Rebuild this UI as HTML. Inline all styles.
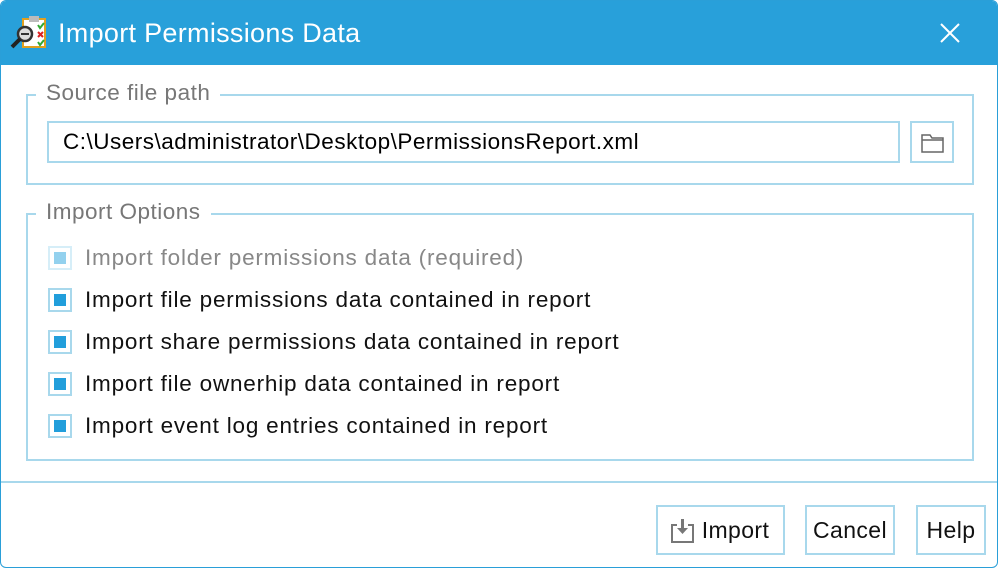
<!DOCTYPE html><html><head><style>
body{margin:0;width:998px;height:568px;overflow:hidden;background:#fff;font-family:"Liberation Sans",sans-serif;}
.win{position:absolute;left:0;top:0;width:996px;height:566px;border:1px solid #2a9fd8;border-radius:6px;overflow:hidden;background:#fff}
.tb{position:absolute;left:0;top:0;right:0;height:64px;background:#28a0da;color:#fff}
.tt{position:absolute;left:57px;top:17px;font-size:27px;letter-spacing:0.3px}
.x{position:absolute;left:938px;top:21px}
.grp{position:absolute;border:2px solid #a8d8ec}
.lg{position:absolute;background:#fff;color:#777;font-size:22.5px;letter-spacing:0.5px;padding:0 10px;top:-16px;left:8px}
.inp{position:absolute;left:46px;top:120px;font-size:22.5px;letter-spacing:0.5px;line-height:38px;padding-left:14px;box-sizing:border-box;width:853px;height:42px;border:2px solid #a8d8ec}
.br{position:absolute;left:909px;top:120px;width:44px;height:42px;border:2px solid #a8d8ec;box-sizing:border-box}
.cb{position:absolute;left:47px;width:24px;height:24px;border:2px solid #a8d8ec;box-sizing:border-box;background:#fff}
.cb i{position:absolute;left:4px;top:4px;width:12px;height:12px;background:#229edb}
.lb{position:absolute;left:84px;font-size:22.5px;letter-spacing:0.8px;color:#111}
.btn{position:absolute;top:504px;height:50px;border:2px solid #a8d8ec;box-sizing:border-box;font-size:23px;letter-spacing:0.4px;line-height:46px;text-align:center;color:#111}
</style></head><body><div class="win">
<div class="tb">
<svg style="position:absolute;left:8px;top:12px" width="42" height="42" viewBox="0 0 42 42"><rect x="14" y="6" width="22" height="28" fill="#fff" stroke="#e0a020" stroke-width="2"/><rect x="20" y="3" width="10" height="6" fill="#bbb"/><path d="M29 12l2 3 4-5M29 29l2 3 4-5" stroke="#3a3" stroke-width="2" fill="none"/><path d="M29 19l5 5M34 19l-5 5" stroke="#d22" stroke-width="2"/><circle cx="16" cy="21" r="7" fill="#ddd" stroke="#333" stroke-width="2.5"/><path d="M11 26l-8 8" stroke="#222" stroke-width="4"/><path d="M12 21h8" stroke="#333" stroke-width="2"/></svg>
<div class="tt">Import Permissions Data</div>
<svg class="x" width="22" height="22"><path d="M2 2L20 20M20 2L2 20" stroke="#fff" stroke-width="2"/></svg></div>
<div class="grp" style="left:25px;top:93px;width:944px;height:87px"><div class="lg">Source file path</div></div>
<div class="inp">C:\Users\administrator\Desktop\PermissionsReport.xml</div>
<div class="br"><svg style="position:absolute;left:9px;top:9px" width="24" height="22"><path d="M1 3h8l2 3h11v14H1z" fill="none" stroke="#666" stroke-width="1.5"/><path d="M1 8h21" stroke="#666" stroke-width="1.5"/></svg></div>
<div class="grp" style="left:25px;top:212px;width:944px;height:244px"><div class="lg">Import Options</div></div>
<div class="cb" style="top:245px;border-color:#d6eef8"><i style="background:#93d1ee"></i></div><div class="lb" style="top:244px;color:#888">Import folder permissions data (required)</div>
<div class="cb" style="top:287px"><i></i></div><div class="lb" style="top:286px">Import file permissions data contained in report</div>
<div class="cb" style="top:329px"><i></i></div><div class="lb" style="top:328px">Import share permissions data contained in report</div>
<div class="cb" style="top:371px"><i></i></div><div class="lb" style="top:370px">Import file ownerhip data contained in report</div>
<div class="cb" style="top:413px"><i></i></div><div class="lb" style="top:412px">Import event log entries contained in report</div>
<div style="position:absolute;left:0;right:0;top:480px;height:2px;background:#a8d8ec"></div>
<div class="btn" style="left:655px;width:129px;padding-left:30px"><svg style="position:absolute;left:12px;top:11px" width="26" height="26"><path d="M7 7H2v17h21V7h-5" fill="none" stroke="#777" stroke-width="2"/><path d="M12.5 1v13" stroke="#777" stroke-width="3"/><path d="M7 10l5.5 6 5.5-6z" fill="#777"/></svg>Import</div>
<div class="btn" style="left:804px;width:90px">Cancel</div>
<div class="btn" style="left:915px;width:70px">Help</div>
</div></body></html>
